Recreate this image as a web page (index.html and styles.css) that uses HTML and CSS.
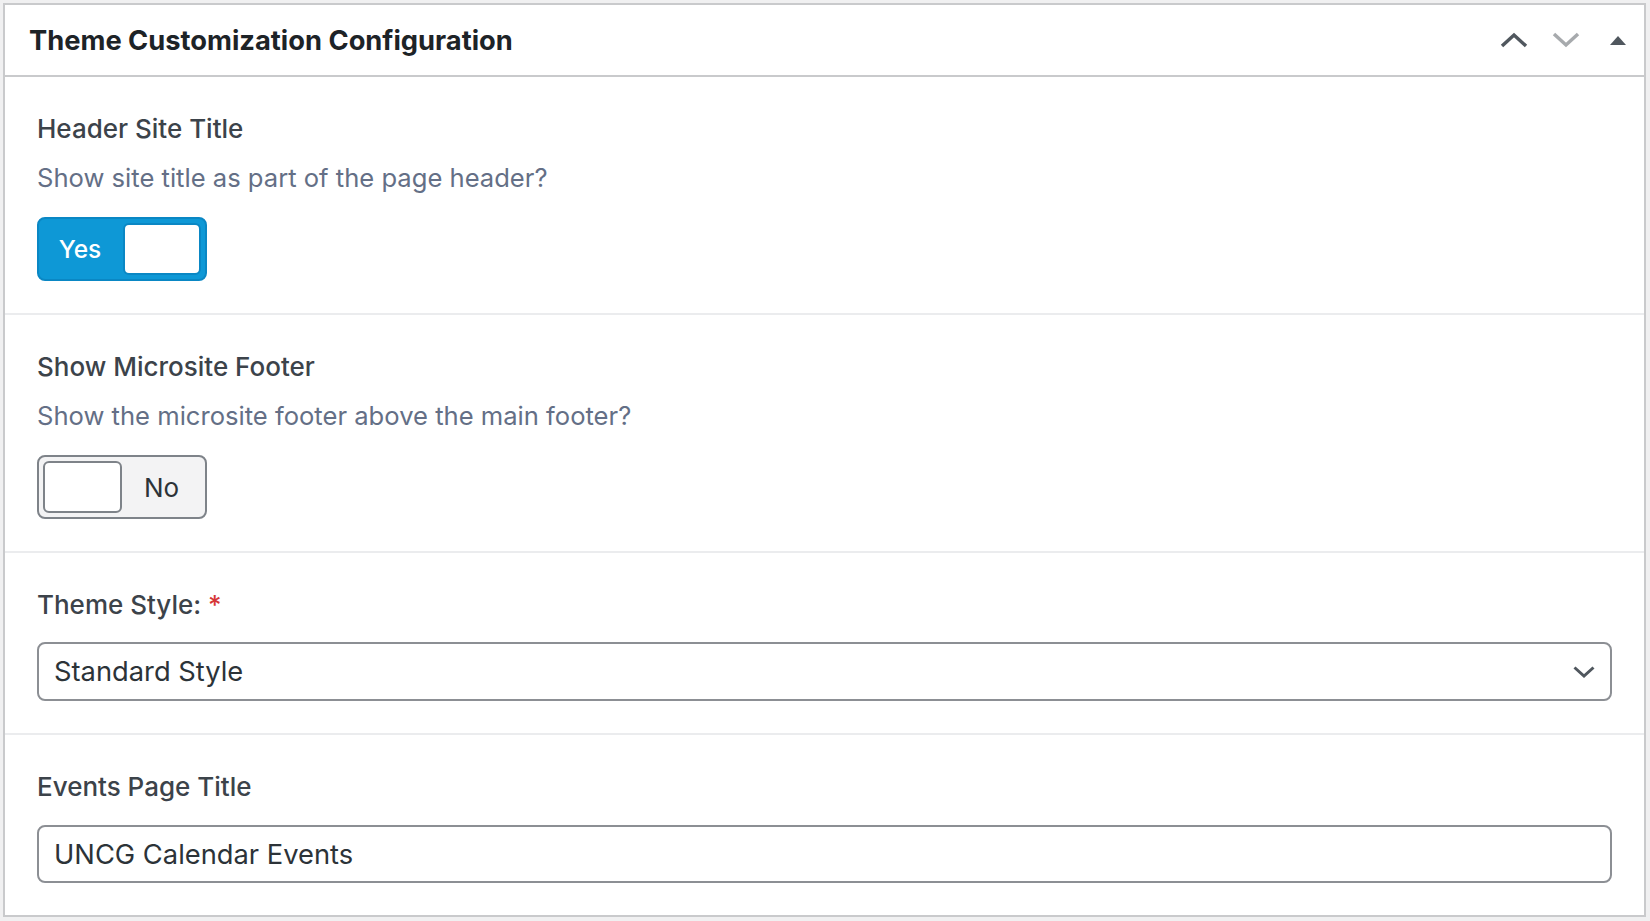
FILE: index.html
```html
<!DOCTYPE html>
<html lang="en">
<head>
    <meta charset="UTF-8">
    <meta name="viewport" content="width=device-width, initial-scale=1.0">
    <title>Theme Customization Configuration</title>
    <link rel="stylesheet" href="styles.css">
</head>
<body>
    <div class="postbox">
        <div class="postbox-header">
            <h2>Theme Customization Configuration</h2>
            <div class="handle-actions">
                <button class="handle-btn" aria-label="Move up">
                    <svg width="28" height="16" viewBox="0 0 28 16"><path d="M2 14 L14 3 L26 14" fill="none" stroke="#50575e" stroke-width="3.5"/></svg>
                </button>
                <button class="handle-btn" aria-label="Move down">
                    <svg width="28" height="16" viewBox="0 0 28 16"><path d="M2 2 L14 13 L26 2" fill="none" stroke="#a7aaad" stroke-width="3.5"/></svg>
                </button>
                <button class="handle-btn" aria-label="Toggle panel">
                    <svg width="16" height="9" viewBox="0 0 16 9"><polygon points="0,9 8,0 16,9" fill="#50575e"/></svg>
                </button>
            </div>
        </div>

        <div class="inside">
            <div class="field">
                <label class="field-label">Header Site Title</label>
                <p class="description">Show site title as part of the page header?</p>
                <div class="switch on">
                    <span class="switch-text">Yes</span>
                    <span class="knob"></span>
                </div>
            </div>

            <div class="field">
                <label class="field-label">Show Microsite Footer</label>
                <p class="description">Show the microsite footer above the main footer?</p>
                <div class="switch">
                    <span class="knob"></span>
                    <span class="switch-text">No</span>
                </div>
            </div>

            <div class="field field-select">
                <label class="field-label">Theme Style: <span class="required">*</span></label>
                <div class="select">
                    <span>Standard Style</span>
                    <svg width="22" height="12" viewBox="0 0 22 12"><path d="M1.5 1.5 L11 10 L20.5 1.5" fill="none" stroke="#50575e" stroke-width="3"/></svg>
                </div>
            </div>

            <div class="field field-text">
                <label class="field-label">Events Page Title</label>
                <input type="text" class="text-input" value="UNCG Calendar Events">
            </div>
        </div>
    </div>
</body>
</html>
```

FILE: styles.css
```css
body {
    font-family: Inter, "Noto Sans", sans-serif;
    background: #f0f0f1;
    margin: 0;
    padding: 3px 4px 4px 3px;
}

.postbox {
    background: #fff;
    border: 2px solid #c9cacc;
    color: #3c434a;
}

.postbox-header {
    display: flex;
    align-items: center;
    justify-content: space-between;
    height: 70px;
    border-bottom: 2px solid #c9cacc;
    padding-left: 24px;
}

.postbox-header h2 {
    margin: 0;
    font-size: 27.3px;
    font-weight: 700;
    color: #1d2327;
}

.handle-actions {
    display: flex;
    height: 100%;
}

.handle-btn {
    width: 52px;
    height: 100%;
    border: none;
    background: none;
    padding: 0;
    display: flex;
    align-items: center;
    justify-content: center;
}

.field {
    padding: 33px 32px 32px;
    border-top: 2px solid #ebecee;
}

.field:first-child {
    border-top: none;
}

.field-label {
    display: block;
    font-size: 26px;
    line-height: 38px;
    font-weight: 500;
    color: #3c434a;
}

.required {
    color: #d63638;
}

.description {
    margin: 11px 0 20px;
    font-size: 25.6px;
    line-height: 38px;
    color: #646f86;
}

.switch {
    display: flex;
    box-sizing: border-box;
    width: 170px;
    height: 64px;
    padding: 4px;
    border: 2px solid #7e8389;
    border-radius: 8px;
    background: #f3f3f4;
}

.switch.on {
    background: #0e98d6;
    border-color: #0a87c4;
}

.switch-text {
    flex: 1;
    display: flex;
    align-items: center;
    justify-content: center;
    font-size: 26px;
    color: #2c3338;
}

.switch.on .switch-text {
    padding-right: 6px;
    font-size: 24.5px;
    font-weight: 500;
    color: #fff;
}

.knob {
    width: 79px;
    box-sizing: border-box;
    background: #fff;
    border: 2px solid #7e8389;
    border-radius: 6px;
}

.switch.on .knob {
    width: 78px;
    border-color: #0a87c4;
}

.field-select .select,
.field-text .text-input {
    box-sizing: border-box;
    width: 100%;
    height: 59px;
    margin-top: 18px;
    border: 2px solid #8c8f94;
    border-radius: 8px;
    padding: 0 15px;
    font-family: inherit;
    font-size: 27.3px;
    color: #2c3338;
    background: #fff;
}

.select {
    display: flex;
    align-items: center;
    justify-content: space-between;
}

.field-text .text-input {
    height: 58px;
    margin-top: 19px;
    display: block;
}
```
